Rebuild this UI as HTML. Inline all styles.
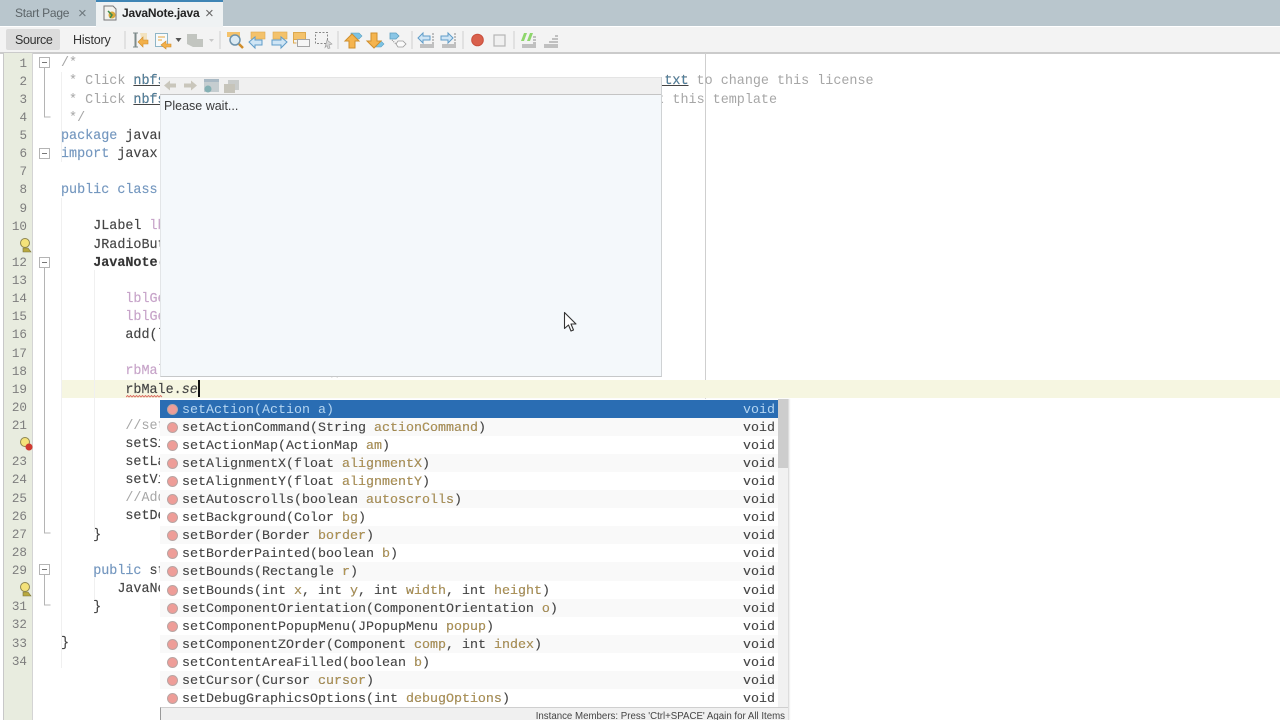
<!DOCTYPE html>
<html><head><meta charset="utf-8"><title>JavaNote.java</title>
<style>
html,body{margin:0;padding:0;background:#fff;overflow:hidden}
#r{position:relative;width:1280px;height:720px;overflow:hidden;background:#fff;filter:blur(.35px);font-family:"Liberation Sans",sans-serif}
#r>*{position:absolute}
.code,.nums,.items{font-family:"Liberation Mono",monospace;font-size:13.42px;line-height:18.12px}
.code,.nums{white-space:pre}
.code{left:61px;top:55.300px;color:#444;-webkit-text-stroke:.15px #444}
.nums{left:4px;width:23px;top:54.500px;text-align:right;color:#7d7d7d;font-size:12.6px}
.c{color:#a6a6a6;-webkit-text-stroke:0}.k{color:#7497bf;-webkit-text-stroke:.15px #7497bf}.f{color:#c7a4c9;-webkit-text-stroke:.15px #c7a4c9}.l{color:#4f86a8;text-decoration:underline}.b{font-weight:bold;color:#333}
.p{color:#b4954f}
.items{left:160px;top:399.500px;width:618px;height:307px;overflow:hidden;color:#444;font-size:13.33px;-webkit-text-stroke:.12px #444}
.items div{height:18.12px;line-height:22px;padding-left:22px;position:relative;white-space:pre;overflow:hidden}
.items div:nth-child(even){background:#f9f9f9}
.items div:before{content:"";position:absolute;left:7px;top:4px;width:9px;height:9px;border-radius:50%;background:#ee9d98;border:1px solid #b9a5a3}
.items div i{position:absolute;right:3px;top:0;font-style:normal}
.items div.s{background:#2a6db3;color:#b5d6f2;-webkit-text-stroke:0}
.items div.s .p{color:#b5d6f2}
.tb{left:0;top:0}
</style></head><body>
<div id="r">
<div style="left:0;top:0;width:1280px;height:26px;background:#b9c6cd"></div>
<div style="left:96px;top:0;width:127px;height:27px;background:#eff2f3"></div>
<div style="left:96px;top:0;width:127px;height:2px;background:#3f85b5"></div>
<div style="left:15px;top:6px;font-size:12px;letter-spacing:-.25px;color:#5c6468">Start Page</div>
<div style="left:78px;top:5px;font-size:15px;color:#6d777c">×</div>
<div style="left:122px;top:6px;font-size:12px;font-weight:bold;letter-spacing:-.2px;color:#222">JavaNote.java</div>
<div style="left:205px;top:5px;font-size:15px;color:#666">×</div>
<div style="left:0;top:27px;width:1280px;height:25px;background:#f3f3f3"></div>
<div style="left:0;top:52px;width:1280px;height:1.5px;background:#cbcbcb"></div>
<div style="left:6px;top:29px;width:54px;height:21px;background:#dcdcdc;border-radius:2px"></div>
<div style="left:15px;top:33px;font-size:12.5px;letter-spacing:-.35px;color:#333">Source</div>
<div style="left:73px;top:33px;font-size:12.5px;letter-spacing:-.2px;color:#333">History</div>

<svg class="tb" width="1280" height="56" viewBox="0 0 1280 56" fill="none">
<!-- tab file icon -->
<path d="M104 6h9l3 3v11h-12z" fill="#f2f2ee" stroke="#777"/><circle cx="112" cy="15" r="3.5" fill="#d9a83b"/><path d="M108 11l4 4-2 3" stroke="#3d8c4a" stroke-width="1.5"/>
<g stroke="#cfcfcf"><path d="M125 31v18M220 31v18M338 31v18M412 31v18M463 31v18M514 31v18"/></g>
<!-- last edit -->
<path d="M133 33h3v14h-3M135 33v14M133 33h5M133 47h5" stroke="#7d8a8a"/><path d="M140 33h7v9h-5z" fill="#f2e2bf"/><path d="M148 40h-5v-3l-5 5 5 5v-3h5z" fill="#f2b04a" stroke="#d08c2a" stroke-width=".6"/>
<!-- doc arrow -->
<rect x="155.500" y="33.500" width="12" height="13" fill="#f7fafb" stroke="#8fb5c6"/><path d="M158 37h7M158 40h4" stroke="#e8a53d"/><path d="M171 44h-5v-3l-5 4 5 4v-2h5z" fill="#f2b04a" stroke="#d08c2a" stroke-width=".6"/>
<path d="M175.500 38h6l-3 4z" fill="#555"/>
<path d="M187 34h10v5h6v8h-10l-6-3z" fill="#c2c5c0"/><path d="M209 39h5l-2.500 3z" fill="#c8c8c8"/>
<!-- search -->
<rect x="227" y="32" width="13" height="5" fill="#f4c26b"/><circle cx="235" cy="40" r="5" fill="#dbeaf3" stroke="#6f93ab" stroke-width="1.500"/><path d="M239 44l4 4" stroke="#d08c2a" stroke-width="2.500"/>
<!-- prev -->
<rect x="251" y="32" width="14" height="7" fill="#f4c26b" stroke="#dca94f" stroke-width=".6"/><path d="M249 42l6-5v3h7v5h-7v3z" fill="#cfe5f5" stroke="#5f9cc9"/>
<!-- next -->
<rect x="273" y="32" width="14" height="7" fill="#f4c26b" stroke="#dca94f" stroke-width=".6"/><path d="M287 42l-6-5v3h-9v5h9v3z" fill="#cfe5f5" stroke="#5f9cc9"/>
<!-- toggle -->
<rect x="293.500" y="32.500" width="12" height="7" fill="#f4c26b" stroke="#dca94f"/><rect x="297.500" y="39.500" width="12" height="7" fill="#f6f6f6" stroke="#a5a5a5"/><path d="M293.500 40v3h3" stroke="#dca94f"/>
<!-- rect select -->
<rect x="315.500" y="32.500" width="12" height="11" stroke="#888" stroke-dasharray="2 1.500"/><path d="M327 40l5 4-3 1 1 3-2 .5-1-3-2 2z" fill="#d9d9d9" stroke="#999" stroke-width=".6"/>
<!-- up -->
<path d="M351 33h8l3 3-3 3h-8z" fill="#7cc3e4" stroke="#5d9fc0" stroke-width=".6"/><path d="M352 34l-7 7h4v7h6v-7h4z" fill="#f5b44e" stroke="#cf8f2d"/>
<!-- down -->
<path d="M373 41h8l3 3-3 3h-8z" fill="#7cc3e4" stroke="#5d9fc0" stroke-width=".6"/><path d="M374 48l-7-7h4v-8h6v8h4z" fill="#f5b44e" stroke="#cf8f2d"/>
<!-- shift tags -->
<path d="M390 33h6l3 3-3 3h-6z" fill="#8ac6e6" stroke="#5d9fc0" stroke-width=".8"/><path d="M398 41h5l3 3-3 3h-5l-2-3z" fill="#fafafa" stroke="#999" stroke-width=".8"/><path d="M392 40l4 4" stroke="#888" stroke-dasharray="1 1"/>
<!-- indent -->
<path d="M430 36h-7v-3l-5 5 5 5v-3h7z" fill="#cfe5f5" stroke="#5f9cc9"/>
<path d="M432 34h2M432 37h2M432 40h2M432 43h2" stroke="#888"/><path d="M420 45h14M420 47h14" stroke="#8c8c8c"/>
<path d="M441 36h7v-3l5 5-5 5v-3h-7z" fill="#cfe5f5" stroke="#5f9cc9"/><path d="M454 34h2M454 37h2M454 40h2M454 43h2" stroke="#888"/><path d="M442 45h14M442 47h14" stroke="#8c8c8c"/>
<!-- record / stop -->
<circle cx="477.500" cy="40" r="5.800" fill="#d9604c" stroke="#c94f3d"/>
<rect x="494" y="35" width="11" height="11" fill="#f0f0f0" stroke="#b5b5b5" stroke-width="1.200"/>
<!-- comment -->
<path d="M524 33h3l-3 8h-3zM530 33h3l-3 8h-3z" fill="#8ed66c"/><path d="M533 37h3M533 40h3M533 43h3M522 45h14M522 47h14" stroke="#8c8c8c"/>
<path d="M555 36h3M552 39h6M549 42h9M544 45h14M544 47h14" stroke="#8c8c8c"/>
</svg>

<!-- editor -->
<div style="left:3px;top:53px;width:1px;height:667px;background:#c8c8c8"></div>
<div style="left:4px;top:53px;width:28px;height:667px;background:#e8ecdf"></div>
<div style="left:32px;top:53px;width:1px;height:667px;background:#d4d4d4"></div>
<div style="left:705px;top:53px;width:1px;height:667px;background:#cfcfcf"></div>
<div style="left:61px;top:380px;width:1219px;height:18px;background:#f6f6e1"></div>

<div class="nums">1
2
3
4
5
6
7
8
9
10

12
13
14
15
16
17
18
19
20
21

23
24
25
26
27
28
29

31
32
33
34</div>

<div class="code"><span class="c">/*</span>
<span class="c"> * Click </span><span class="l">nbfs://nbhost/SystemFileSystem/Templates/Licenses/license-default.txt</span><span class="c"> to change this license</span>
<span class="c"> * Click </span><span class="l">nbfs://nbhost/SystemFileSystem/Templates/Classes/Clas.java</span><span class="c"> to edit this template</span>
<span class="c"> */</span>
<span class="k">package</span> javanote;
<span class="k">import</span> javax.swing.*;

<span class="k">public class</span> JavaNote extends JFrame {

    JLabel <span class="f">lblGender;</span>
    JRadioButton rbMale, rbFemale;
    <span class="b">JavaNote</span>(){

        <span class="f">lblGender</span> = new JLabel();
        <span class="f">lblGender</span>.setText();
        add(lblGender);

        <span class="f">rbMale</span> = new JRadioButton();
        rbMale.<i>se</i>

        <span class="c">//set</span>
        setSize();
        setLayout();
        setVisible();
        <span class="c">//Add</span>
        setDefaultCloseOperation();
    }

    <span class="k">public</span> static void main(){
       JavaNote();
    }

}</div>

<svg style="left:0;top:53px" width="120" height="667" viewBox="0 53 120 667" fill="none">
<g stroke="#b4b4b4" fill="#fff"><rect x="39.500" y="57.500" width="10" height="10"/><rect x="39.500" y="148.500" width="10" height="10"/><rect x="39.500" y="257.500" width="10" height="10"/><rect x="39.500" y="564.500" width="10" height="10"/></g>
<path d="M42 62.500h5M42 153.500h5M42 262.500h5M42 569.500h5" stroke="#777"/>
<path d="M44.500 68v49h6M44.500 268v265h6M44.500 575v30h6" stroke="#b4b4b4"/>
<path d="M61.500 72v90M61.500 198v470M94.500 270v262M94.500 578v22" stroke="#f0f0f0"/>
<!-- bulbs -->
<g>
<circle cx="25" cy="243" r="4.500" fill="#f4e27a" stroke="#8d8550"/><path d="M23 248h5l3 4h-8z" fill="#b9a93f" stroke="#77713c" stroke-width=".6"/>
<circle cx="25" cy="442" r="4.500" fill="#f4e27a" stroke="#8d8550"/><circle cx="29" cy="447" r="3.500" fill="#cf3a30"/>
<circle cx="25" cy="587" r="4.500" fill="#f4e27a" stroke="#8d8550"/><path d="M23 592h5l3 4h-8z" fill="#b9a93f" stroke="#77713c" stroke-width=".6"/>
</g>
</svg>
<svg style="left:126px;top:394px" width="50" height="5" fill="none"><path d="M0 3l1.500-1.500 1.500 1.500 1.500-1.500 1.500 1.500 1.500-1.500 1.500 1.500 1.500-1.500 1.500 1.500 1.500-1.500 1.500 1.500 1.500-1.500 1.500 1.500 1.500-1.500 1.500 1.500 1.500-1.500 1.500 1.500 1.500-1.500 1.500 1.500 1.500-1.500 1.500 1.500 1.500-1.500 1.500 1.500 1.500-1.500 1.500 1.500" stroke="#d96b60" stroke-width=".9"/></svg>
<div style="left:198px;top:380px;width:2px;height:17px;background:#111"></div>

<!-- doc popup -->
<div style="left:160px;top:70px;width:503px;height:7px;background:#fff"></div>
<div style="left:160px;top:77px;width:500px;height:299px;background:#f4f8fb;border-right:1.500px solid #cfd2d4;border-bottom:1.500px solid #c6c8c9;border-left:1px solid #e2e5e7"></div>
<div style="left:160px;top:77px;width:501px;height:18px;background:#f0f0f0;border-bottom:1px solid #c4c4c4;border-top:1px solid #e4e4e4;box-sizing:border-box"></div>
<svg style="left:160px;top:77px" width="80" height="18" fill="none">
<path d="M4 8.500l6-5v3h6v4h-6v3z" fill="#c9c6bb"/><path d="M37 8.500l-6-5v3h-7v4h7v3z" fill="#c9c6bb"/>
<rect x="44" y="2" width="15" height="13" fill="#c5cdd0"/><rect x="44" y="2" width="15" height="3" fill="#a9b9c4"/><circle cx="48" cy="12" r="3.500" fill="#84b0b4"/>
<rect x="68" y="3" width="11" height="10" fill="#c9cccb"/><rect x="64" y="7" width="11" height="9" fill="#c6c4ba"/>
</svg>
<div style="left:164px;top:99px;font-size:12.5px;color:#3a3a3a">Please wait...</div>

<!-- completion -->
<div style="left:160px;top:399px;width:628px;height:321px;background:#fff;border-right:1px solid #ddd;box-shadow:1px 0 1px #eee"></div>
<div style="left:778px;top:399px;width:10px;height:308px;background:#f1f1f1"></div>
<div style="left:778px;top:399px;width:10px;height:69px;background:#cdcdcd"></div>
<div class="items"><div class="s">setAction(Action <span class="p">a</span>)<i>void</i></div><div>setActionCommand(String <span class="p">actionCommand</span>)<i>void</i></div><div>setActionMap(ActionMap <span class="p">am</span>)<i>void</i></div><div>setAlignmentX(float <span class="p">alignmentX</span>)<i>void</i></div><div>setAlignmentY(float <span class="p">alignmentY</span>)<i>void</i></div><div>setAutoscrolls(boolean <span class="p">autoscrolls</span>)<i>void</i></div><div>setBackground(Color <span class="p">bg</span>)<i>void</i></div><div>setBorder(Border <span class="p">border</span>)<i>void</i></div><div>setBorderPainted(boolean <span class="p">b</span>)<i>void</i></div><div>setBounds(Rectangle <span class="p">r</span>)<i>void</i></div><div>setBounds(int <span class="p">x</span>, int <span class="p">y</span>, int <span class="p">width</span>, int <span class="p">height</span>)<i>void</i></div><div>setComponentOrientation(ComponentOrientation <span class="p">o</span>)<i>void</i></div><div>setComponentPopupMenu(JPopupMenu <span class="p">popup</span>)<i>void</i></div><div>setComponentZOrder(Component <span class="p">comp</span>, int <span class="p">index</span>)<i>void</i></div><div>setContentAreaFilled(boolean <span class="p">b</span>)<i>void</i></div><div>setCursor(Cursor <span class="p">cursor</span>)<i>void</i></div><div>setDebugGraphicsOptions(int <span class="p">debugOptions</span>)<i>void</i></div></div>
<div style="left:160px;top:707px;width:628px;height:13px;background:#f0f0f0;border-top:1px solid #cfcfcf;border-left:1px solid #999;box-sizing:border-box"></div>
<div style="left:400px;width:385px;top:710px;text-align:right;font-size:9.7px;line-height:14px;color:#444;white-space:nowrap">Instance Members: Press 'Ctrl+SPACE' Again for All Items</div>

<!-- mouse cursor -->
<svg style="left:562px;top:311px" width="16" height="22" fill="none"><path d="M2.500 1.500v16l4-3.500 2.500 6 2.500-1-2.500-6h5z" fill="#fff" stroke="#333" stroke-width="1.100" stroke-linejoin="round"/></svg>
</div>
</body></html>
